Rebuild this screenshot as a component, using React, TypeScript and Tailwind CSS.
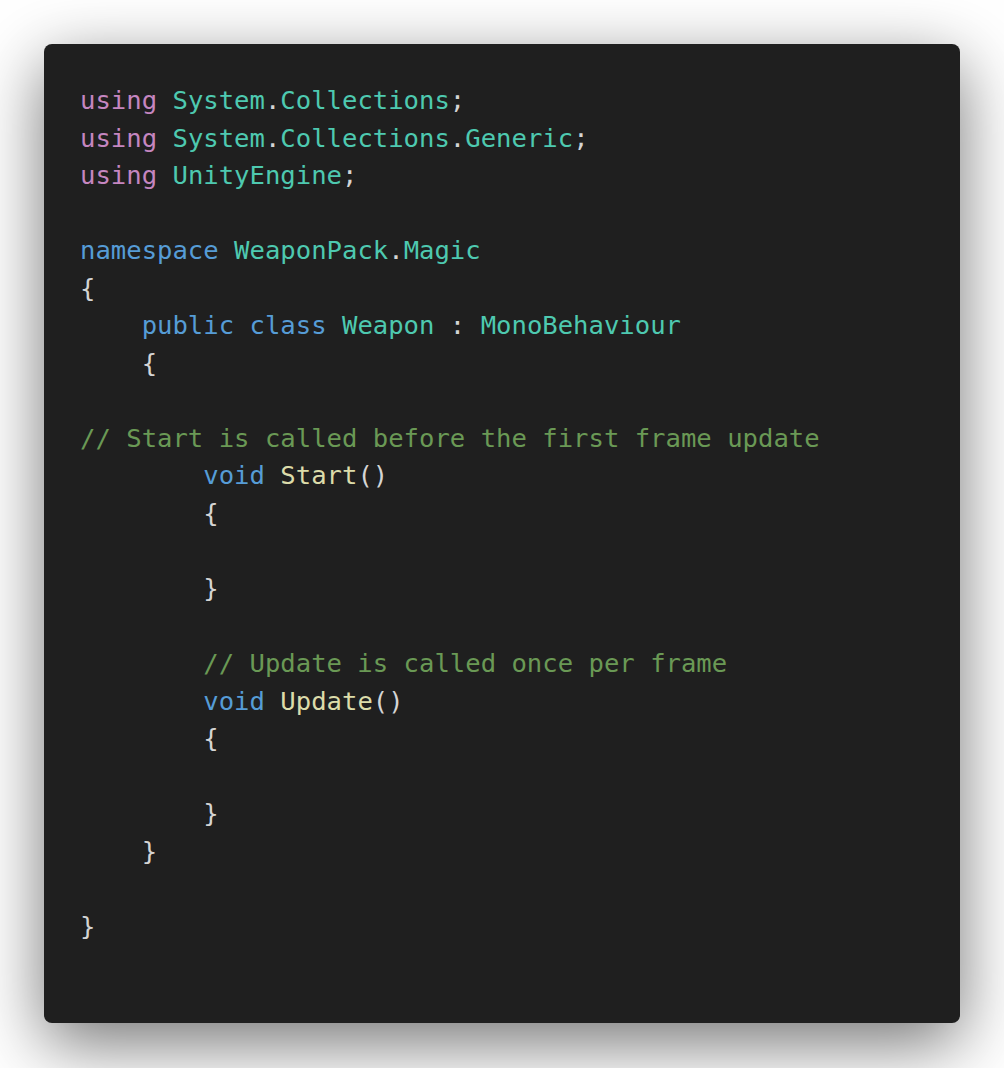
type Tok = [string, string];

const C = {
  kw: "text-[#569cd6]",
  use: "text-[#c586c0]",
  type: "text-[#4ec9b0]",
  fn: "text-[#dcdcaa]",
  cm: "text-[#6a9955]",
  tx: "text-[#d4d4d4]",
};

const lines: Tok[][] = [
  [["using", C.use], [" ", C.tx], ["System", C.type], [".", C.tx], ["Collections", C.type], [";", C.tx]],
  [["using", C.use], [" ", C.tx], ["System", C.type], [".", C.tx], ["Collections", C.type], [".", C.tx], ["Generic", C.type], [";", C.tx]],
  [["using", C.use], [" ", C.tx], ["UnityEngine", C.type], [";", C.tx]],
  [],
  [["namespace", C.kw], [" ", C.tx], ["WeaponPack", C.type], [".", C.tx], ["Magic", C.type]],
  [["{", C.tx]],
  [["    ", C.tx], ["public", C.kw], [" ", C.tx], ["class", C.kw], [" ", C.tx], ["Weapon", C.type], [" : ", C.tx], ["MonoBehaviour", C.type]],
  [["    {", C.tx]],
  [],
  [["// Start is called before the first frame update", C.cm]],
  [["        ", C.tx], ["void", C.kw], [" ", C.tx], ["Start", C.fn], ["()", C.tx]],
  [["        {", C.tx]],
  [],
  [["        }", C.tx]],
  [],
  [["        ", C.tx], ["// Update is called once per frame", C.cm]],
  [["        ", C.tx], ["void", C.kw], [" ", C.tx], ["Update", C.fn], ["()", C.tx]],
  [["        {", C.tx]],
  [],
  [["        }", C.tx]],
  [["    }", C.tx]],
  [],
  [["}", C.tx]],
];

export default function App() {
  return (
    <div className="min-h-screen bg-white p-[44px]">
      <div className="h-[979px] w-full rounded-[8px] bg-[#1f1f1f] pl-[36px] pt-[38px] shadow-[0_20px_68px_0_rgba(0,0,0,0.55)]">
        <pre className="font-['DejaVu_Sans_Mono',monospace] text-[25.6px] leading-[37.55px] text-[#d4d4d4]">
          {lines.map((line, i) => (
            <div key={i} className="h-[37.55px] whitespace-pre">
              {line.map(([t, c], j) => (
                <span key={j} className={c}>
                  {t}
                </span>
              ))}
            </div>
          ))}
        </pre>
      </div>
    </div>
  );
}
